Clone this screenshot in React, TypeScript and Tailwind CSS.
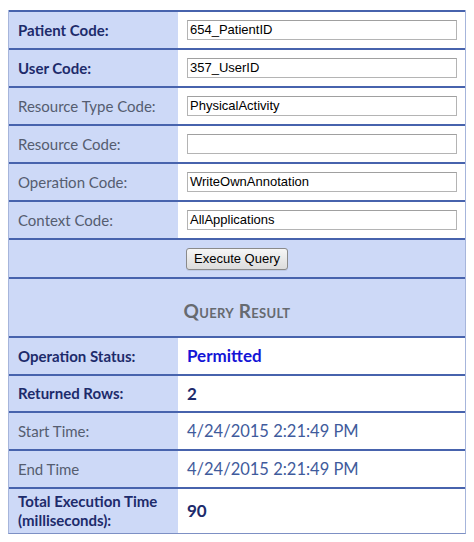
import React from "react";

function LabelRow({
  label,
  bold,
  children,
  h = "h-[38px]",
}: {
  label: React.ReactNode;
  bold?: boolean;
  children: React.ReactNode;
  h?: string;
}) {
  return (
    <div className={`flex ${h} border-t-2 border-[#4763ad]`}>
      <div
        className={`w-[169px] shrink-0 bg-[#cdd9f7] flex items-center pl-[9px] font-['Lato',sans-serif] text-[15px] leading-[19px] ${
          bold ? "font-bold text-[#1d2b6b]" : "text-[#555d70]"
        }`}
      >
        {label}
      </div>
      <div className="flex-1 bg-white flex items-center pl-[9px] font-['Lato',sans-serif]">{children}</div>
    </div>
  );
}

function Input({ value }: { value: string }) {
  return (
    <div className="w-[270px] h-[20px] border border-[#b4b4b4] border-t-[#a0a0a0] bg-white flex items-center pl-[2px] text-[13px] text-black font-['Liberation_Sans',Arial,sans-serif]">
      {value}
    </div>
  );
}

export default function App() {
  return (
    <div className="w-[474px] h-[542px] bg-white pt-[10px] pl-[8px]">
      <div className="w-[458px] border-x border-b border-x-[#a6b5db] border-b-[#7d90c4]">
        <LabelRow label="Patient Code:" bold>
          <Input value="654_PatientID" />
        </LabelRow>
        <LabelRow label="User Code:" bold>
          <Input value="357_UserID" />
        </LabelRow>
        <LabelRow label="Resource Type Code:">
          <Input value="PhysicalActivity" />
        </LabelRow>
        <LabelRow label="Resource Code:">
          <Input value="" />
        </LabelRow>
        <LabelRow label="Operation Code:">
          <Input value="WriteOwnAnnotation" />
        </LabelRow>
        <LabelRow label="Context Code:">
          <Input value="AllApplications" />
        </LabelRow>
        <div className="h-[39px] border-t-2 border-[#4763ad] bg-[#cdd9f7] flex items-center justify-center">
          <button className="h-[22px] px-[7px] rounded-[3px] border border-[#8a8a8a] bg-gradient-to-b from-[#f6f6f6] to-[#dcdcdc] text-[13px] text-black shadow-[0_1px_0_rgba(0,0,0,0.08)] font-['Liberation_Sans',Arial,sans-serif]">
            Execute Query
          </button>
        </div>
        <div className="h-[59px] border-t-2 border-[#4763ad] bg-[#cdd9f7] flex items-end justify-center pb-[11px]">
          <span className="text-[19px] font-bold text-[#666a70] [font-variant:small-caps] tracking-[0.3px] font-['Lato',sans-serif]">
            Query Result
          </span>
        </div>
        <LabelRow label="Operation Status:" bold>
          <span className="text-[17px] font-bold text-[#1515d6]">Permitted</span>
        </LabelRow>
        <LabelRow label="Returned Rows:" bold h="h-[37px]">
          <span className="text-[17px] font-bold text-[#1d2b6b]">2</span>
        </LabelRow>
        <LabelRow label="Start Time:">
          <span className="text-[16.5px] text-[#3f5b9c]">4/24/2015 2:21:49 PM</span>
        </LabelRow>
        <LabelRow label="End Time">
          <span className="text-[16.5px] text-[#3f5b9c]">4/24/2015 2:21:49 PM</span>
        </LabelRow>
        <LabelRow
          label={
            <span>
              Total Execution Time
              <br />
              (milliseconds):
            </span>
          }
          bold
          h="h-[46px]"
        >
          <span className="text-[17px] font-bold text-[#1d2b6b]">90</span>
        </LabelRow>
      </div>
    </div>
  );
}
